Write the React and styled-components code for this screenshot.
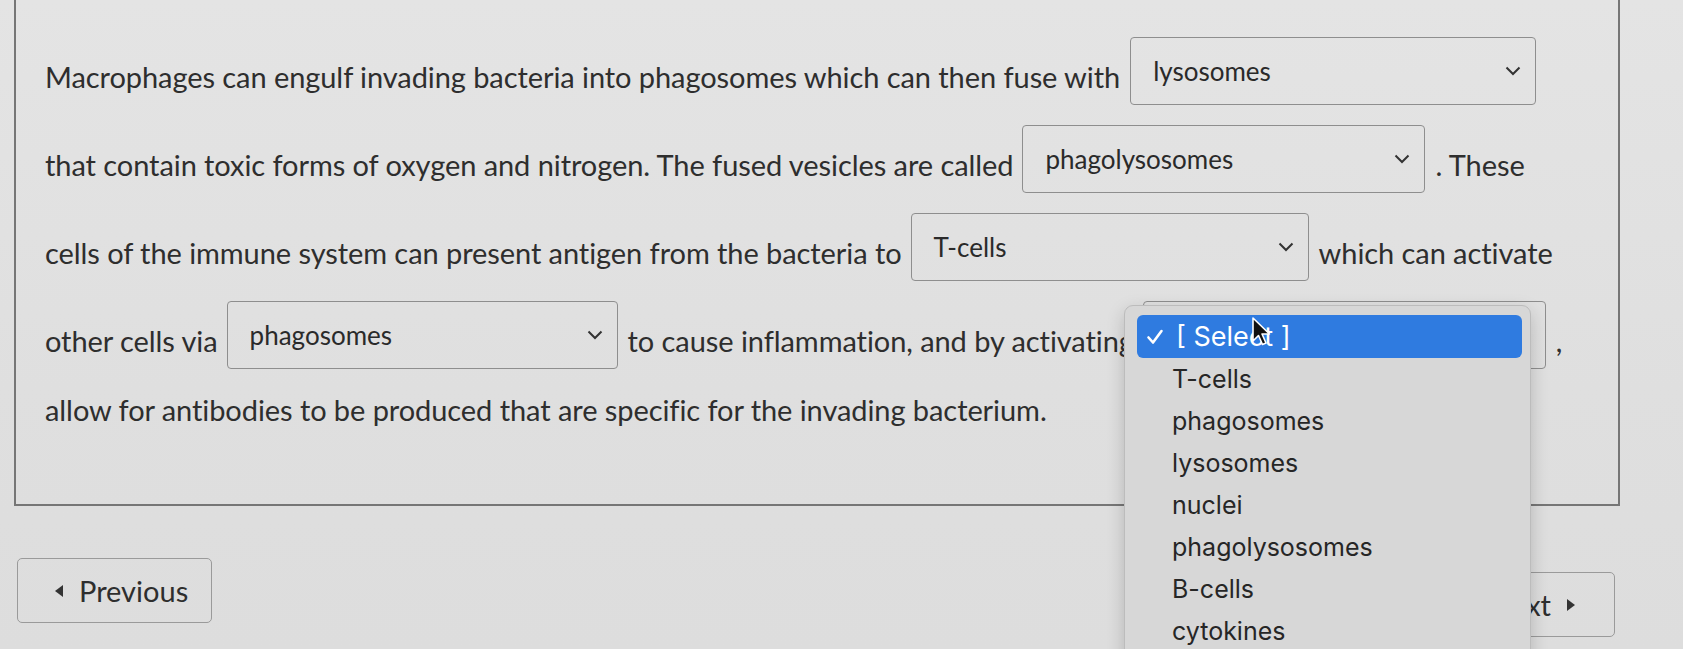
import React from 'react';
import styled, { createGlobalStyle } from 'styled-components';

const GlobalStyle = createGlobalStyle`
  html, body {
    margin: 0;
    padding: 0;
  }
  body {
    background: #e0e0e0;
    font-family: Lato, "Open Sans", sans-serif;
    color: #2e2e2e;
  }
`;

const Page = styled.div`
  position: relative;
  width: 1683px;
  height: 649px;
  overflow: hidden;
  background: linear-gradient(180deg, #e4e4e4 0%, #dfdfdf 60%, #dddddd 100%);
`;

const Panel = styled.div`
  box-sizing: border-box;
  margin-left: 14px;
  width: 1606px;
  height: 506px;
  border: 2px solid #767676;
  border-top: none;
  padding: 37px 0 0 29px;
`;

const Row = styled.div`
  display: flex;
  align-items: center;
  height: ${(p) => p.$h || 68}px;
  margin-bottom: 20px;
`;

const Words = styled.span`
  font-size: 29px;
  letter-spacing: -0.07px;
  margin-top: 10px;
  white-space: nowrap;
`;

const Select = styled.div`
  box-sizing: border-box;
  flex: none;
  width: ${(p) => p.$w}px;
  height: 68px;
  margin: 0 10px 0 ${(p) => (p.$first ? 10 : 9)}px;
  padding: 0 14px 0 22px;
  border: 1.5px solid #8e8e8e;
  border-radius: 4px;
  display: flex;
  align-items: center;
  justify-content: space-between;
  font-size: 26px;
  color: #2a2a2a;
`;

const Chevron = () => (
  <svg width="16" height="10" viewBox="0 0 16 10">
    <polyline points="1.5,1.5 8,8 14.5,1.5" fill="none" stroke="#333" strokeWidth="2" />
  </svg>
);

const Nav = styled.div`
  display: flex;
  justify-content: space-between;
  align-items: flex-start;
  margin-top: 52px;
  padding: 0 68px 0 17px;
`;

const NavButton = styled.div`
  box-sizing: border-box;
  width: 195px;
  height: 65px;
  margin-top: ${(p) => p.$drop || 0}px;
  padding: ${(p) => (p.$next ? '0 39px 0 0' : '0 0 0 37px')};
  border: 1.5px solid #9a9a9a;
  border-radius: 5px;
  display: flex;
  align-items: center;
  justify-content: ${(p) => (p.$next ? 'flex-end' : 'flex-start')};
  gap: 16px;
  font-size: 29px;
  color: #2e2e2e;
`;

const Triangle = styled.span`
  width: 0;
  height: 0;
  border-top: 6px solid transparent;
  border-bottom: 6px solid transparent;
  ${(p) => (p.$right ? 'border-left: 8px solid #333;' : 'border-right: 8px solid #333;')}
`;

const Menu = styled.div`
  position: absolute;
  left: 1124px;
  top: 305px;
  box-sizing: border-box;
  width: 407px;
  height: 370px;
  padding: 9px 8px 0 12px;
  background: #d7d7d7;
  border: 1px solid #bcbcbc;
  border-radius: 9px;
  box-shadow: 0 6px 18px rgba(0, 0, 0, 0.18);
  font-family: Inter, Lato, sans-serif;
`;

const MenuItem = styled.div`
  box-sizing: border-box;
  height: ${(p) => (p.$active ? 43 : 42)}px;
  display: flex;
  align-items: center;
  gap: 12px;
  padding-left: ${(p) => (p.$active ? 9 : 35)}px;
  border-radius: 6px;
  font-size: ${(p) => (p.$active ? 27 : 25)}px;
  color: ${(p) => (p.$active ? '#fff' : '#262626')};
  background: ${(p) => (p.$active ? '#2f7be0' : 'transparent')};
`;

const Cursor = styled.svg`
  position: absolute;
  left: 1251px;
  top: 316px;
`;

const options = ['T-cells', 'phagosomes', 'lysosomes', 'nuclei', 'phagolysosomes', 'B-cells', 'cytokines'];

export default function App() {
  return (
    <Page>
      <GlobalStyle />
      <Panel>
        <Row>
          <Words>Macrophages can engulf invading bacteria into phagosomes which can then fuse with</Words>
          <Select $w={406} $first>lysosomes<Chevron /></Select>
        </Row>
        <Row>
          <Words>that contain toxic forms of oxygen and nitrogen. The fused vesicles are called</Words>
          <Select $w={403}>phagolysosomes<Chevron /></Select>
          <Words>. These</Words>
        </Row>
        <Row>
          <Words>cells of the immune system can present antigen from the bacteria to</Words>
          <Select $w={398}>T-cells<Chevron /></Select>
          <Words>which can activate</Words>
        </Row>
        <Row>
          <Words>other cells via</Words>
          <Select $w={391}>phagosomes<Chevron /></Select>
          <Words>to cause inflammation, and by activating</Words>
          <Select $w={403}><span /><Chevron /></Select>
          <Words>,</Words>
        </Row>
        <Row $h={30}>
          <Words>allow for antibodies to be produced that are specific for the invading bacterium.</Words>
        </Row>
      </Panel>
      <Nav>
        <NavButton><Triangle />Previous</NavButton>
        <NavButton $next $drop={14}>Next<Triangle $right /></NavButton>
      </Nav>
      <Menu>
        <MenuItem $active>
          <svg width="18" height="18" viewBox="0 0 18 18">
            <polyline points="2.5,9.5 7,14.5 15.5,3" fill="none" stroke="#fff" strokeWidth="2.6" strokeLinecap="round" strokeLinejoin="round" />
          </svg>
          [ Select ]
        </MenuItem>
        {options.map((o) => (
          <MenuItem key={o}>{o}</MenuItem>
        ))}
      </Menu>
      <Cursor width="22" height="32" viewBox="0 0 22 32">
        <path d="M2 2 L2 25 L7.5 19.5 L11.5 28.5 L15 27 L11 18 L18.5 18 Z" fill="#111" stroke="#fff" strokeWidth="1.6" strokeLinejoin="round" />
      </Cursor>
    </Page>
  );
}
